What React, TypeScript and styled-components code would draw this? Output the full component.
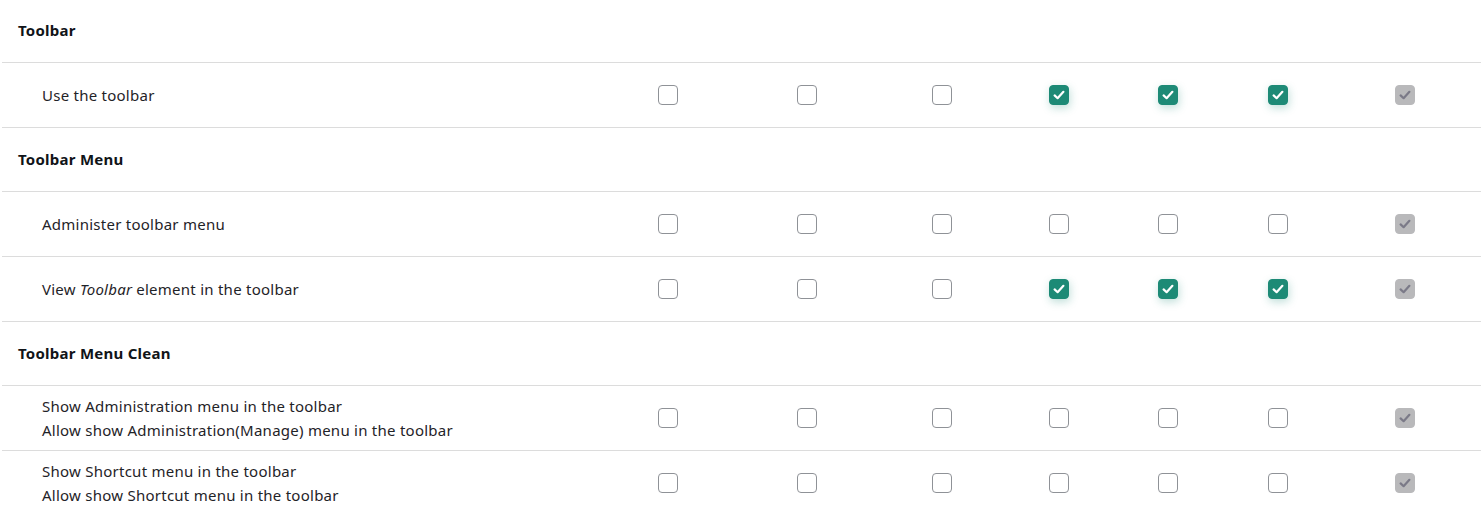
import React from "react";
import styled, { createGlobalStyle, css } from "styled-components";

const GlobalStyle = createGlobalStyle`
  html, body { margin: 0; padding: 0; background: #ffffff; }
  body {
    font-family: "Noto Sans", "Open Sans", sans-serif;
    font-size: 15px;
    letter-spacing: 0.25px;
    color: #1f2328;
  }
`;

const Table = styled.div`
  margin: -1.7px 0 0 2px;
  display: grid;
  grid-template-columns: 595px 142px 136px 134px 100px 118px 102px 1fr;
`;

const Row = styled.div`
  display: contents;
`;

const Cell = styled.div`
  height: 63.66px;
  display: flex;
  align-items: center;
  justify-content: center;
  border-bottom: 1px solid #dcdcdc;
`;

const LabelCell = styled(Cell)<{ $section?: boolean }>`
  justify-content: flex-start;
  padding-left: ${(p) => (p.$section ? "16px" : "40px")};
  line-height: 24px;
  ${(p) =>
    p.$section &&
    css`
      font-weight: 700;
      color: #111418;
    `}
`;

const SectionCell = styled(LabelCell)`
  grid-column: 1 / -1;
`;

const Lines = styled.div`
  display: flex;
  flex-direction: column;
`;

const Box = styled.span<{ $checked?: boolean; $disabled?: boolean }>`
  box-sizing: border-box;
  width: 20px;
  height: 20px;
  border-radius: 4px;
  border: 1px solid #8f9297;
  background: #ffffff;
  display: inline-flex;
  align-items: center;
  justify-content: center;
  ${(p) =>
    p.$checked &&
    css`
      border-color: #1d8a76;
      background: #1d8a76;
      box-shadow: 1px 3px 9px rgba(29, 138, 118, 0.28);
    `}
  ${(p) =>
    p.$disabled &&
    css`
      border-color: #b9b9bb;
      background: #b9b9bb;
      box-shadow: none;
    `}
`;

const Check = ({ color }: { color: string }) => (
  <svg width="14" height="14" viewBox="0 0 14 14">
    <polyline
      points="2.6,7.4 5.6,10.2 11.4,3.8"
      fill="none"
      stroke={color}
      strokeWidth="2.2"
      strokeLinecap="round"
      strokeLinejoin="round"
    />
  </svg>
);

type State = "off" | "on" | "dis";

const CheckBox = ({ state }: { state: State }) => (
  <Box $checked={state !== "off"} $disabled={state === "dis"}>
    {state === "on" && <Check color="#ffffff" />}
    {state === "dis" && <Check color="#7b7a88" />}
  </Box>
);

type Item = { label: React.ReactNode; checks: State[] };
type Section = { title: string; items: Item[] };

const OFF: State[] = ["off", "off", "off", "off", "off", "off", "dis"];
const ON: State[] = ["off", "off", "off", "on", "on", "on", "dis"];

const sections: Section[] = [
  { title: "Toolbar", items: [{ label: "Use the toolbar", checks: ON }] },
  {
    title: "Toolbar Menu",
    items: [
      { label: "Administer toolbar menu", checks: OFF },
      {
        label: (
          <span>
            View <em>Toolbar</em> element in the toolbar
          </span>
        ),
        checks: ON,
      },
    ],
  },
  {
    title: "Toolbar Menu Clean",
    items: [
      {
        label: (
          <Lines>
            <span>Show Administration menu in the toolbar</span>
            <span>Allow show Administration(Manage) menu in the toolbar</span>
          </Lines>
        ),
        checks: OFF,
      },
      {
        label: (
          <Lines>
            <span>Show Shortcut menu in the toolbar</span>
            <span>Allow show Shortcut menu in the toolbar</span>
          </Lines>
        ),
        checks: OFF,
      },
    ],
  },
];

export default function App() {
  return (
    <>
      <GlobalStyle />
      <Table>
        {sections.map((s) => (
          <React.Fragment key={s.title}>
            <SectionCell $section>{s.title}</SectionCell>
            {s.items.map((it, i) => (
              <Row key={i}>
                <LabelCell>{it.label}</LabelCell>
                {it.checks.map((c, j) => (
                  <Cell key={j}>
                    <CheckBox state={c} />
                  </Cell>
                ))}
              </Row>
            ))}
          </React.Fragment>
        ))}
      </Table>
    </>
  );
}
